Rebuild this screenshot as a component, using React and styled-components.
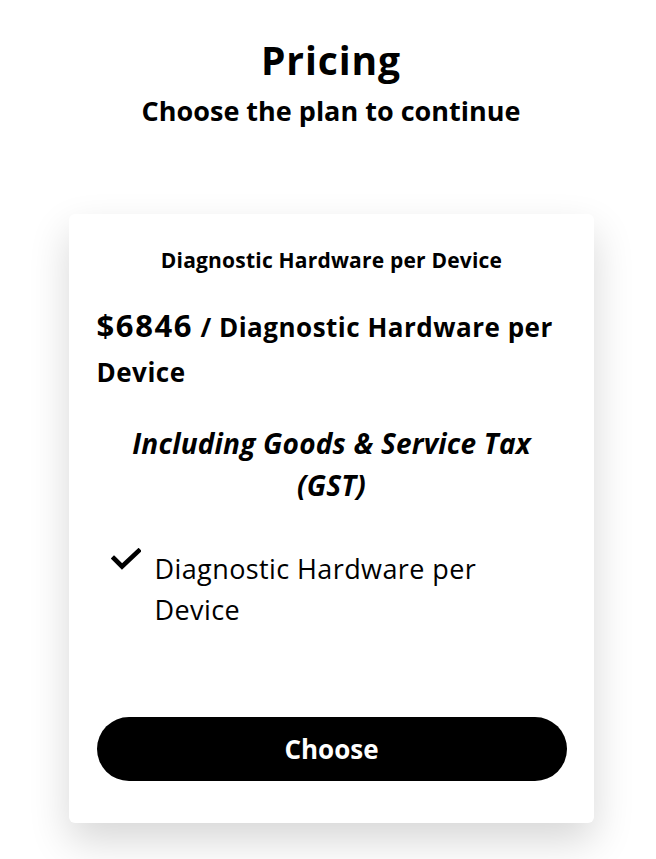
import React from "react";
import styled, { createGlobalStyle } from "styled-components";

const GlobalStyle = createGlobalStyle`
	* {
		box-sizing: border-box;
	}
	body {
		margin: 0;
		background: #ffffff;
		font-family: "Open Sans", "Noto Sans", sans-serif;
		color: #000000;
	}
`;

const PricingPage = styled.div`
	width: 100%;
	display: flex;
	flex-direction: column;
	align-items: center;
	padding: 34px 0 37px 6px;
`;

const PageTitle = styled.h1`
	margin: 0;
	font-size: 39px;
	font-weight: 700;
	line-height: 52px;
	letter-spacing: 0.9px;
`;

const PageSubtitle = styled.h2`
	margin: 0;
	font-size: 27px;
	font-weight: 700;
	line-height: 50px;
	letter-spacing: 0;
`;

const PlanCard = styled.div`
	width: 525px;
	margin-top: 78px;
	padding: 28px 27px 42px 28px;
	background: #ffffff;
	border-radius: 6px;
	box-shadow: 0 18px 40px rgba(0, 0, 0, 0.16);
	display: flex;
	flex-direction: column;
`;

const PlanName = styled.h3`
	margin: 0;
	text-align: center;
	font-size: 21px;
	font-weight: 700;
	line-height: 36px;
	letter-spacing: 0.2px;
`;

const PlanPrice = styled.p`
	margin: 25px 0 0;
	font-size: 26px;
	font-weight: 700;
	line-height: 45px;
	letter-spacing: 0.5px;
`;

const PriceAmount = styled.span`
	font-size: 31px;
	line-height: 45px;
	letter-spacing: 1.6px;
`;

const TaxNote = styled.p`
	margin: 27px auto 0;
	max-width: 430px;
	text-align: center;
	font-size: 28px;
	font-weight: 700;
	font-style: italic;
	line-height: 42px;
	letter-spacing: 0.2px;
`;

const FeatureList = styled.ul`
	list-style: none;
	margin: 42px 0 0;
	padding: 0 60px 0 14px;
`;

const FeatureItem = styled.li`
	display: flex;
	align-items: flex-start;
	gap: 14px;
	font-size: 27px;
	font-weight: 400;
	line-height: 41px;
	letter-spacing: 0.4px;
`;

const CheckIcon = styled.svg`
	flex-shrink: 0;
	width: 30px;
	height: 24px;
`;

const ChooseButton = styled.button`
	margin-top: 87px;
	width: 100%;
	height: 64px;
	border: none;
	border-radius: 32px;
	background: #000000;
	color: #ffffff;
	font-family: inherit;
	font-size: 26px;
	font-weight: 700;
	letter-spacing: 0;
	cursor: pointer;
`;

const Check = () => (
	<CheckIcon viewBox="0 0 30 24">
		<path d="M3 10.5 L11 18.5 L27.5 3" fill="none" stroke="#000" strokeWidth="4.6" strokeLinecap="square" />
	</CheckIcon>
);

const App = () => {
	return (
		<>
			<GlobalStyle />
			<PricingPage>
				<PageTitle>Pricing</PageTitle>
				<PageSubtitle>Choose the plan to continue</PageSubtitle>
				<PlanCard>
					<PlanName>Diagnostic Hardware per Device</PlanName>
					<PlanPrice>
						<PriceAmount>$6846</PriceAmount> / Diagnostic Hardware per Device
					</PlanPrice>
					<TaxNote>Including Goods &amp; Service Tax (GST)</TaxNote>
					<FeatureList>
						<FeatureItem>
							<Check />
							<span>Diagnostic Hardware per Device</span>
						</FeatureItem>
					</FeatureList>
					<ChooseButton>Choose</ChooseButton>
				</PlanCard>
			</PricingPage>
		</>
	);
};

export default App;
